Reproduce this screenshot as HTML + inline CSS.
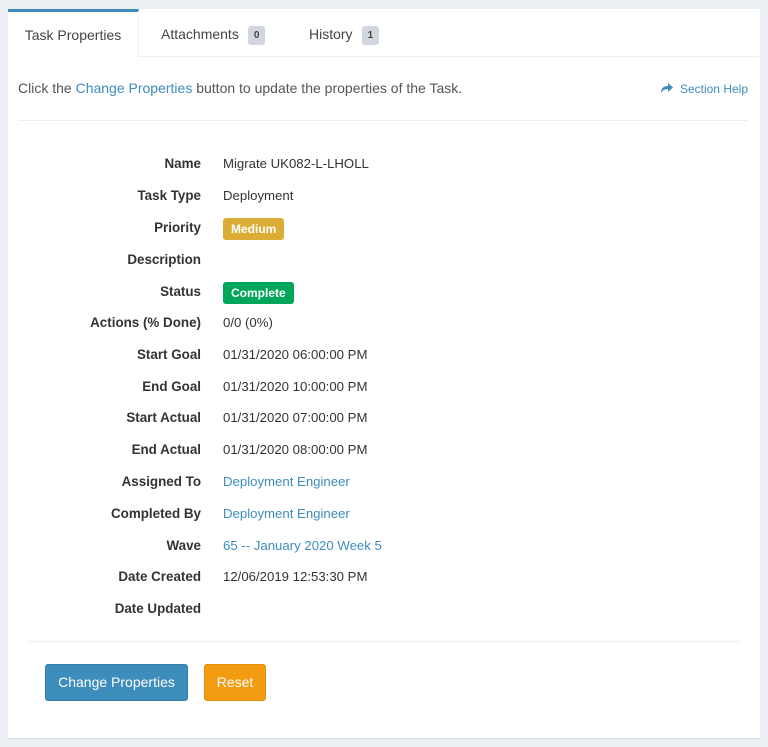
<!DOCTYPE html>
<html><head><style>
body{margin:0;background:#ecf0f5;width:768px;height:747px;font-family:"Liberation Sans",sans-serif;font-size:13px;color:#333;position:relative;overflow:hidden}
.card{position:absolute;left:8px;top:9px;width:752px;height:729px;background:#fff;box-shadow:0 1px 1px rgba(0,0,0,.1)}
.tabs{position:absolute;left:0;top:0;width:752px;height:47px;border-bottom:1px solid #f0f0f0}
.tab{position:absolute;top:0;height:47px;line-height:50px;font-size:14px;color:#444}
.active{left:0;width:130px;border-top:3px solid #3c8dbc;height:45px;line-height:46px;text-align:center;background:#fff;border-right:1px solid #f0f0f0}
.badge{display:inline-block;background:#d2d6de;color:#444;font-size:10px;font-weight:bold;padding:0 6px;height:19px;line-height:19px;border-radius:3px;margin-left:9px;vertical-align:1px}
a{color:#3c8dbc;text-decoration:none}
.intro{position:absolute;left:10px;top:71px;color:#555;font-size:14px}
.help{position:absolute;right:12px;top:73px;font-size:12px;color:#3c8dbc}
.hr1{position:absolute;left:10px;top:111px;width:730px;height:1px;background:#eee}
.row{position:absolute;left:0;width:752px;height:20px;line-height:20px}
.l{position:absolute;right:559px;font-weight:bold;color:#333;text-align:right;white-space:nowrap;font-size:13.4px}
.v{position:absolute;left:215px;white-space:nowrap;font-size:13.2px}
.lbl{display:inline-block;color:#fff;font-size:12px;font-weight:bold;padding:0 8px;height:22px;line-height:22px;border-radius:3px}
.hr2{position:absolute;left:20px;top:632px;width:712px;height:1px;background:#eee}
.btn{position:absolute;top:655px;height:35px;line-height:35px;color:#fff;font-size:14px;text-align:center;border-radius:3px}
</style></head><body>
<div class="card">
<div class="tabs">
<div class="tab active">Task Properties</div>
<div class="tab" style="left:153px">Attachments<span class="badge">0</span></div>
<div class="tab" style="left:301px">History<span class="badge">1</span></div>
</div>
<div class="intro">Click the <a>Change Properties</a> button to update the properties of the Task.</div>
<div class="help"><svg width="14" height="12" viewBox="0 0 14 12" style="vertical-align:-1px;margin-right:6px"><path d="M1 11C1 6 4 4 8 4V1l5 4.5L8 10V7C5 7 2.5 8 1 11Z" fill="#3c8dbc"/></svg>Section Help</div>
<div class="hr1"></div>

<div class="row" style="top:145px"><span class="l">Name</span><span class="v">Migrate UK082-L-LHOLL</span></div>
<div class="row" style="top:177px"><span class="l">Task Type</span><span class="v">Deployment</span></div>
<div class="row" style="top:209px"><span class="l">Priority</span><span class="v"><span class="lbl" style="background:#dbac36">Medium</span></span></div>
<div class="row" style="top:241px"><span class="l">Description</span></div>
<div class="row" style="top:273px"><span class="l">Status</span><span class="v"><span class="lbl" style="background:#00a65a">Complete</span></span></div>
<div class="row" style="top:304px"><span class="l">Actions (% Done)</span><span class="v">0/0 (0%)</span></div>
<div class="row" style="top:336px"><span class="l">Start Goal</span><span class="v">01/31/2020 06:00:00 PM</span></div>
<div class="row" style="top:368px"><span class="l">End Goal</span><span class="v">01/31/2020 10:00:00 PM</span></div>
<div class="row" style="top:399px"><span class="l">Start Actual</span><span class="v">01/31/2020 07:00:00 PM</span></div>
<div class="row" style="top:431px"><span class="l">End Actual</span><span class="v">01/31/2020 08:00:00 PM</span></div>
<div class="row" style="top:463px"><span class="l">Assigned To</span><span class="v"><a>Deployment Engineer</a></span></div>
<div class="row" style="top:495px"><span class="l">Completed By</span><span class="v"><a>Deployment Engineer</a></span></div>
<div class="row" style="top:527px"><span class="l">Wave</span><span class="v"><a>65 -- January 2020 Week 5</a></span></div>
<div class="row" style="top:558px"><span class="l">Date Created</span><span class="v">12/06/2019 12:53:30 PM</span></div>
<div class="row" style="top:590px"><span class="l">Date Updated</span></div>

<div class="hr2"></div>
<div class="btn" style="left:37px;width:141px;background:#3c8dbc;border:1px solid #367fa9">Change Properties</div>
<div class="btn" style="left:196px;width:60px;background:#f39c12;border:1px solid #e08e0b">Reset</div>
</div>
</body></html>
